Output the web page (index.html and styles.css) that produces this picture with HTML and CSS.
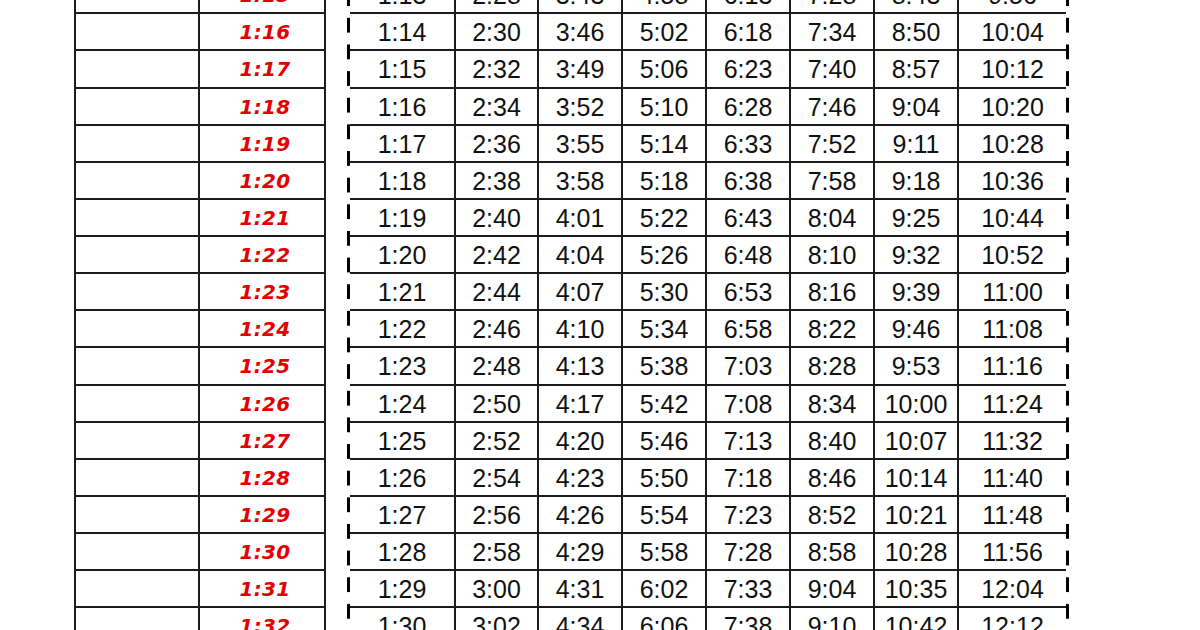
FILE: index.html
```html
<!DOCTYPE html>
<html>
<head>
<meta charset="utf-8">
<link rel="stylesheet" href="styles.css">
</head>
<body>
<div class="sheet">
  <div class="left">
    <div class="lrow"><div class="lc"></div><div class="lc pace">1:15</div></div>
    <div class="lrow"><div class="lc"></div><div class="lc pace">1:16</div></div>
    <div class="lrow"><div class="lc"></div><div class="lc pace">1:17</div></div>
    <div class="lrow"><div class="lc"></div><div class="lc pace">1:18</div></div>
    <div class="lrow"><div class="lc"></div><div class="lc pace">1:19</div></div>
    <div class="lrow"><div class="lc"></div><div class="lc pace">1:20</div></div>
    <div class="lrow"><div class="lc"></div><div class="lc pace">1:21</div></div>
    <div class="lrow"><div class="lc"></div><div class="lc pace">1:22</div></div>
    <div class="lrow"><div class="lc"></div><div class="lc pace">1:23</div></div>
    <div class="lrow"><div class="lc"></div><div class="lc pace">1:24</div></div>
    <div class="lrow"><div class="lc"></div><div class="lc pace">1:25</div></div>
    <div class="lrow"><div class="lc"></div><div class="lc pace">1:26</div></div>
    <div class="lrow"><div class="lc"></div><div class="lc pace">1:27</div></div>
    <div class="lrow"><div class="lc"></div><div class="lc pace">1:28</div></div>
    <div class="lrow"><div class="lc"></div><div class="lc pace">1:29</div></div>
    <div class="lrow"><div class="lc"></div><div class="lc pace">1:30</div></div>
    <div class="lrow"><div class="lc"></div><div class="lc pace">1:31</div></div>
    <div class="lrow"><div class="lc"></div><div class="lc pace">1:32</div></div>
  </div>
  <div class="right">
    <div class="dash"></div>
    <div class="grid">
      <div class="rrow"><div>1:13</div><div>2:28</div><div>3:43</div><div>4:58</div><div>6:13</div><div>7:28</div><div>8:43</div><div>9:56</div></div>
      <div class="rrow"><div>1:14</div><div>2:30</div><div>3:46</div><div>5:02</div><div>6:18</div><div>7:34</div><div>8:50</div><div>10:04</div></div>
      <div class="rrow"><div>1:15</div><div>2:32</div><div>3:49</div><div>5:06</div><div>6:23</div><div>7:40</div><div>8:57</div><div>10:12</div></div>
      <div class="rrow"><div>1:16</div><div>2:34</div><div>3:52</div><div>5:10</div><div>6:28</div><div>7:46</div><div>9:04</div><div>10:20</div></div>
      <div class="rrow"><div>1:17</div><div>2:36</div><div>3:55</div><div>5:14</div><div>6:33</div><div>7:52</div><div>9:11</div><div>10:28</div></div>
      <div class="rrow"><div>1:18</div><div>2:38</div><div>3:58</div><div>5:18</div><div>6:38</div><div>7:58</div><div>9:18</div><div>10:36</div></div>
      <div class="rrow"><div>1:19</div><div>2:40</div><div>4:01</div><div>5:22</div><div>6:43</div><div>8:04</div><div>9:25</div><div>10:44</div></div>
      <div class="rrow"><div>1:20</div><div>2:42</div><div>4:04</div><div>5:26</div><div>6:48</div><div>8:10</div><div>9:32</div><div>10:52</div></div>
      <div class="rrow"><div>1:21</div><div>2:44</div><div>4:07</div><div>5:30</div><div>6:53</div><div>8:16</div><div>9:39</div><div>11:00</div></div>
      <div class="rrow"><div>1:22</div><div>2:46</div><div>4:10</div><div>5:34</div><div>6:58</div><div>8:22</div><div>9:46</div><div>11:08</div></div>
      <div class="rrow"><div>1:23</div><div>2:48</div><div>4:13</div><div>5:38</div><div>7:03</div><div>8:28</div><div>9:53</div><div>11:16</div></div>
      <div class="rrow"><div>1:24</div><div>2:50</div><div>4:17</div><div>5:42</div><div>7:08</div><div>8:34</div><div>10:00</div><div>11:24</div></div>
      <div class="rrow"><div>1:25</div><div>2:52</div><div>4:20</div><div>5:46</div><div>7:13</div><div>8:40</div><div>10:07</div><div>11:32</div></div>
      <div class="rrow"><div>1:26</div><div>2:54</div><div>4:23</div><div>5:50</div><div>7:18</div><div>8:46</div><div>10:14</div><div>11:40</div></div>
      <div class="rrow"><div>1:27</div><div>2:56</div><div>4:26</div><div>5:54</div><div>7:23</div><div>8:52</div><div>10:21</div><div>11:48</div></div>
      <div class="rrow"><div>1:28</div><div>2:58</div><div>4:29</div><div>5:58</div><div>7:28</div><div>8:58</div><div>10:28</div><div>11:56</div></div>
      <div class="rrow"><div>1:29</div><div>3:00</div><div>4:31</div><div>6:02</div><div>7:33</div><div>9:04</div><div>10:35</div><div>12:04</div></div>
      <div class="rrow"><div>1:30</div><div>3:02</div><div>4:34</div><div>6:06</div><div>7:38</div><div>9:10</div><div>10:42</div><div>12:12</div></div>
    </div>
    <div class="dash"></div>
  </div>
</div>
</body>
</html>
```

FILE: styles.css
```css
html, body {
  margin: 0;
  padding: 0;
  background: #fff;
  width: 1200px;
  height: 630px;
  overflow: hidden;
}

.sheet {
  display: flex;
  align-items: flex-start;
  padding-left: 74px;
  margin-top: -22.84px;
}

.left {
  display: flex;
  flex-direction: column;
  border-left: 2px solid #1c1c1c;
}

.lrow {
  display: grid;
  grid-template-columns: 124px 126px;
  height: 37.14px;
  box-sizing: border-box;
  border-bottom: 2px solid #1c1c1c;
}

.lc {
  border-right: 2px solid #1c1c1c;
  display: flex;
  align-items: center;
  justify-content: center;
}

.pace {
  font-family: "DejaVu Sans", sans-serif;
  font-weight: bold;
  font-style: oblique;
  font-size: 20px;
  color: #e40000;
  padding-left: 6px;
  padding-top: 1px;
  letter-spacing: 0.3px;
}

.right {
  display: flex;
  margin-left: 21px;
}

.dash {
  width: 3px;
  align-self: stretch;
  background-image: linear-gradient(#000 0, #000 15px, transparent 15px);
  background-size: 3px 26.65px;
  background-position: 0 14.2px;
  background-repeat: repeat-y;
}

.grid {
  display: flex;
  flex-direction: column;
}

.rrow {
  display: grid;
  grid-template-columns: 106px 83px 84px 84px 84px 84px 84px 107px;
  height: 37.14px;
  box-sizing: border-box;
  border-bottom: 2px solid #1c1c1c;
}

.rrow > div {
  border-right: 2px solid #1c1c1c;
  display: flex;
  align-items: center;
  justify-content: center;
  padding-top: 2px;
  font-family: "Liberation Sans", Arial, sans-serif;
  font-size: 25px;
  color: #111;
}

.rrow > div:last-child {
  border-right: none;
}
```
